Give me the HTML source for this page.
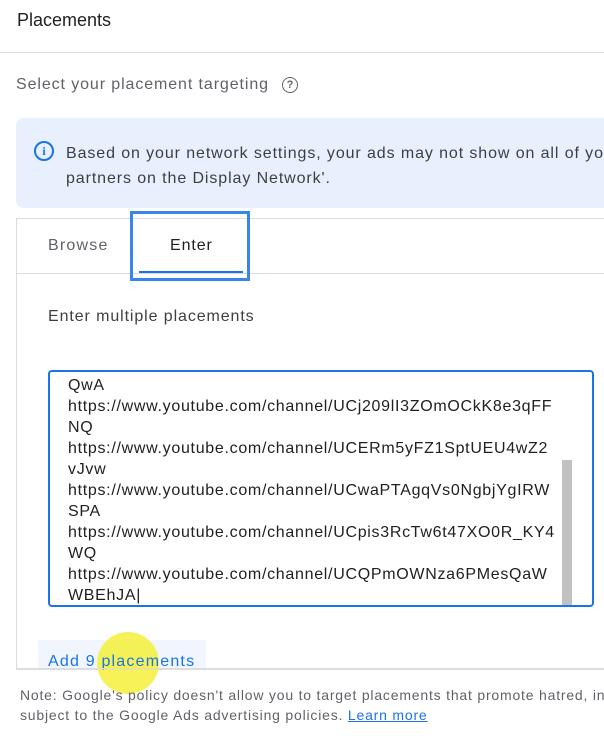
<!DOCTYPE html>
<html><head><style>
body{margin:0;width:604px;height:750px;overflow:hidden;background:#fff;font-family:"Liberation Sans",Arial,sans-serif;position:relative}
.a{position:absolute;white-space:nowrap}
</style></head><body>
<div class="a" style="left:17px;top:10px;font-size:18px;color:#202124">Placements</div>
<div class="a" style="left:0;top:52px;width:604px;height:1px;background:#dadce0"></div>
<div class="a" style="left:16px;top:76px;font-size:16px;color:#5f6368;letter-spacing:0.9px">Select your placement targeting</div>
<div class="a" style="left:282px;top:77px;width:14px;height:14px;border:1.5px solid #5f6368;border-radius:50%;font-size:11px;line-height:14px;text-align:center;color:#5f6368;font-weight:bold">?</div>
<div class="a" style="left:16px;top:118px;width:600px;height:90px;background:#e8f0fe;border-radius:8px"></div>
<div class="a" style="left:34px;top:141px;width:16px;height:16px;border:2px solid #1a73e8;border-radius:50%;font-size:12px;line-height:16px;text-align:center;color:#1a73e8;font-weight:bold;font-family:'Liberation Serif',serif">i</div>
<div class="a" style="left:66px;top:141px;font-size:16px;color:#3c4043;line-height:25px;letter-spacing:0.9px">Based on your network settings, your ads may not show on all of yo<br>partners on the Display Network'.</div>
<div class="a" style="left:16px;top:218px;width:600px;height:450px;border:1px solid #dadce0"></div>
<div class="a" style="left:16px;top:273px;width:600px;height:1px;background:#dadce0"></div>
<div class="a" style="left:48px;top:237px;font-size:16px;color:#5f6368;letter-spacing:1.2px">Browse</div>
<div class="a" style="left:170px;top:237px;font-size:16px;color:#202124;letter-spacing:0.9px">Enter</div>
<div class="a" style="left:139px;top:271px;width:104px;height:2px;background:#1a73e8"></div>
<div class="a" style="left:130px;top:211px;width:114px;height:64px;border:3px solid #3a86e8"></div>
<div class="a" style="left:48px;top:308px;font-size:16px;color:#3c4043;letter-spacing:0.9px">Enter multiple placements</div>
<div class="a" style="left:48px;top:370px;width:542px;height:233px;border:2px solid #1a73e8;border-radius:4px;overflow:hidden">
<div style="position:absolute;left:18px;top:3px;font-size:16px;line-height:21px;color:#202124;letter-spacing:0.7px">QwA<br>https://www.youtube.com/channel/UCj209lI3ZOmOCkK8e3qFF<br>NQ<br>https://www.youtube.com/channel/UCERm5yFZ1SptUEU4wZ2<br>vJvw<br>https://www.youtube.com/channel/UCwaPTAgqVs0NgbjYgIRW<br>SPA<br>https://www.youtube.com/channel/UCpis3RcTw6t47XO0R_KY4<br>WQ<br>https://www.youtube.com/channel/UCQPmOWNza6PMesQaW<br>WBEhJA|</div>
<div style="position:absolute;left:512px;top:88px;width:10px;height:150px;background:#c1c1c1"></div>
</div>
<div class="a" style="left:38px;top:640px;width:168px;height:28px;background:#f1f5fd"></div>
<div class="a" style="left:97px;top:632px;width:62px;height:62px;border-radius:50%;background:#f5f03a;opacity:.85"></div>
<div class="a" style="left:48px;top:653px;font-size:16px;color:#1a73e8;letter-spacing:1.2px">Add 9 placements</div>
<div class="a" style="left:16px;top:668px;width:600px;height:1px;background:#dadce0"></div>
<div class="a" style="left:20px;top:685px;font-size:14px;color:#5f6368;line-height:20px;letter-spacing:0.8px">Note: Google's policy doesn't allow you to target placements that promote hatred, in<br>subject to the Google Ads advertising policies. <span style="color:#1a73e8;text-decoration:underline">Learn more</span></div>
</body></html>
